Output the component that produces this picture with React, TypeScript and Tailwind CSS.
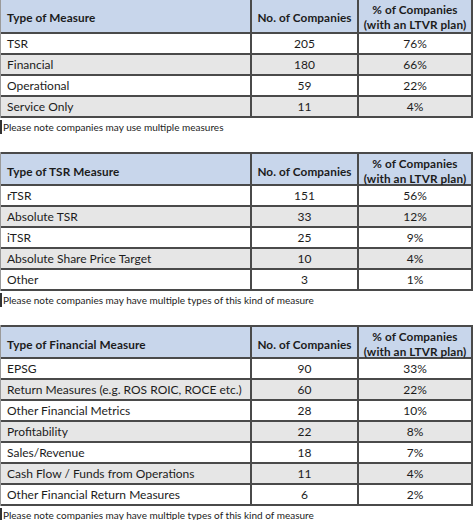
import React from "react";

type Row = [string, string, string];

const tables: { title: string; rows: Row[]; note: string }[] = [
  {
    title: "Type of Measure",
    rows: [
      ["TSR", "205", "76%"],
      ["Financial", "180", "66%"],
      ["Operational", "59", "22%"],
      ["Service Only", "11", "4%"],
    ],
    note: "Please note companies may use multiple measures",
  },
  {
    title: "Type of TSR Measure",
    rows: [
      ["rTSR", "151", "56%"],
      ["Absolute TSR", "33", "12%"],
      ["iTSR", "25", "9%"],
      ["Absolute Share Price Target", "10", "4%"],
      ["Other", "3", "1%"],
    ],
    note: "Please note companies may have multiple types of this kind of measure",
  },
  {
    title: "Type of Financial Measure",
    rows: [
      ["EPSG", "90", "33%"],
      ["Return Measures (e.g. ROS ROIC, ROCE etc.)", "60", "22%"],
      ["Other Financial Metrics", "28", "10%"],
      ["Profitability", "22", "8%"],
      ["Sales/Revenue", "18", "7%"],
      ["Cash Flow / Funds from Operations", "11", "4%"],
      ["Other Financial Return Measures", "6", "2%"],
    ],
    note: "Please note companies may have multiple types of this kind of measure",
  },
];

const grid = "grid grid-cols-[249px_107px_1fr]";

const DataTable: React.FC<{ title: string; rows: Row[]; note: string; first?: boolean }> = ({
  title,
  rows,
  note,
  first,
}) => {
  return (
    <div className={first ? "" : "mt-[18px]"}>
      <div className="border-l border-l-[#9a9a9a] border-r-2 border-r-[#4a4a4a] mr-[1px]">
        <div
          className={`${grid} h-[34px] bg-[#c8d6eb] border-b-2 border-[#4a4a4a] ${
            first ? "" : "border-t-2"
          } font-bold text-[11.75px] leading-[15px] tracking-[0.1px]`}
        >
          <div className="flex items-center pl-[6px] pt-[2px]">{title}</div>
          <div className="flex items-center justify-center border-l-2 border-[#4a4a4a] pt-[2px]">
            No. of Companies
          </div>
          <div className="flex items-center justify-center text-center border-l-2 border-[#4a4a4a] pt-[2px]">
            % of Companies
            <br />
            (with an LTVR plan)
          </div>
        </div>
        {rows.map((r, i) => (
          <div
            key={r[0]}
            className={`${grid} h-[21px] border-b-2 border-[#4a4a4a] text-[12px] leading-[19px] ${
              i % 2 === 1 ? "bg-[#e6e6e6]" : "bg-white"
            }`}
          >
            <div className="pl-[6px] whitespace-nowrap overflow-hidden">{r[0]}</div>
            <div className="text-center border-l-2 border-[#4a4a4a]">{r[1]}</div>
            <div className="text-center border-l-2 border-[#4a4a4a]">{r[2]}</div>
          </div>
        ))}
      </div>
      <div className="text-[10px] leading-[14px] border-l-2 border-[#333] h-[14px] mt-[2px] flex items-center">
        <span className="pl-[1px]">{note}</span>
      </div>
    </div>
  );
};

export default function App() {
  return (
    <div
      className="w-[474px] h-[520px] overflow-hidden bg-white text-[#1c1c1c]"
      style={{ fontFamily: "Lato, 'Open Sans', sans-serif" }}
    >
      {tables.map((t, i) => (
        <DataTable key={t.title} {...t} first={i === 0} />
      ))}
    </div>
  );
}
